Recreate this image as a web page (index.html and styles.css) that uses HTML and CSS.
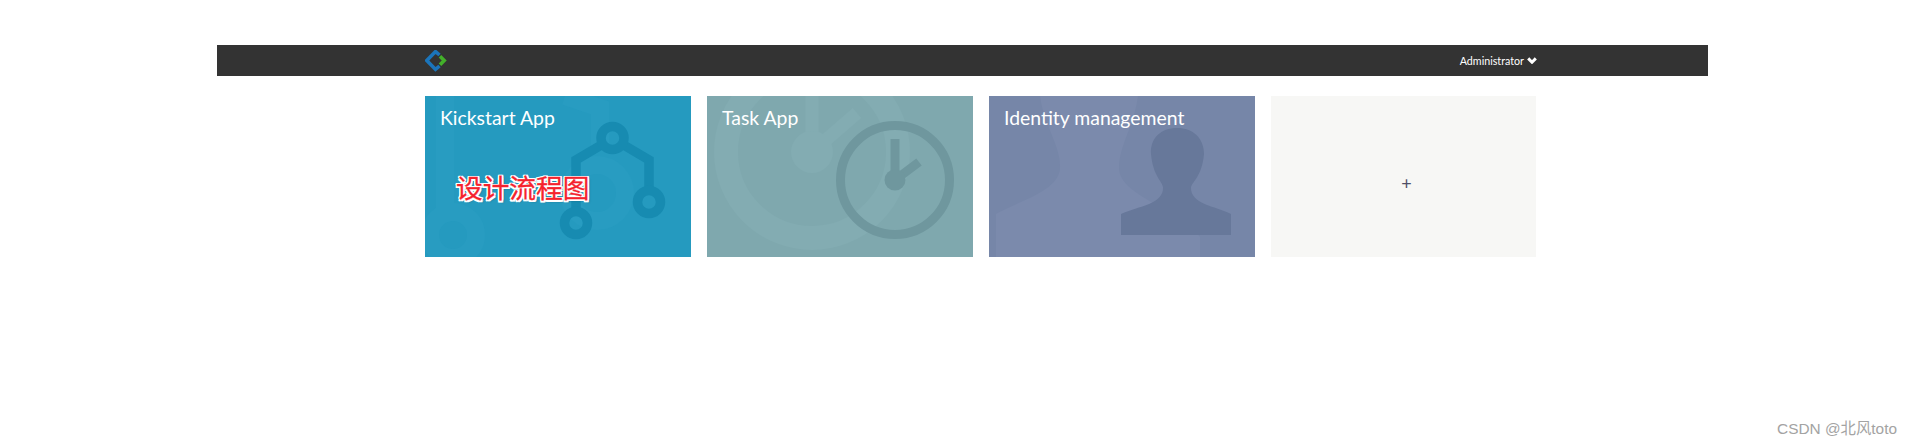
FILE: index.html
```html
<!DOCTYPE html>
<html lang="en">
<head>
    <meta charset="UTF-8">
    <meta name="viewport" content="width=device-width, initial-scale=1.0">
    <title>Flowable</title>
    <link rel="stylesheet" href="styles.css">
</head>
<body>
    <div class="page">
        <header class="navbar">
            <svg class="logo" width="22" height="22" viewBox="0 0 22 22" aria-label="logo">
                <path class="logo-blue" d="M14.5 5 L10.5 1.6 L1.8 10.5 L10.5 19.4 L14.5 16"/>
                <path class="logo-green" d="M15 6.2 L19.2 10.5 L15 14.8"/>
            </svg>
            <div class="user-menu">
                <span>Administrator</span>
                <svg class="chevron" width="10" height="7" viewBox="0 0 10 7">
                    <path d="M1.2 1.4 L5 5.2 L8.8 1.4"/>
                </svg>
            </div>
        </header>

        <main class="apps">
            <a class="app app-kickstart">
                <svg class="app-art" viewBox="0 0 266 161">
                    <g class="art-faint">
                        <circle cx="28" cy="139" r="23" />
                        <path d="M20 0 V 112 M140 0 L175 12 V52" />
                        <circle cx="172" cy="97" r="28" />
                    </g>
                    <g class="art-main">
                        <path d="M151 116 V64 L178 48 M197 48 L224 64 V95" />
                        <circle cx="187.5" cy="42" r="11.5" />
                        <circle cx="224" cy="106" r="11.5" />
                        <circle cx="151" cy="127" r="11.5" />
                    </g>
                </svg>
                <h2 class="app-title">Kickstart App</h2>
                <span class="note">设计流程图</span>
            </a>

            <a class="app app-task">
                <svg class="app-art" viewBox="0 0 266 161">
                    <g class="art-faint">
                        <circle class="ring" cx="105" cy="56" r="86" />
                        <path d="M105 56 V0 M105 56 L150 17" />
                        <circle class="fill" cx="105" cy="56" r="21" />
                    </g>
                    <g class="art-main">
                        <circle cx="188" cy="84" r="54.5" />
                        <path d="M188 84 V43 M188 84 L212 66" />
                        <circle class="fill" cx="188" cy="84" r="10.5" />
                    </g>
                </svg>
                <h2 class="app-title">Task App</h2>
            </a>

            <a class="app app-idm">
                <svg class="app-art" viewBox="0 0 266 161">
                    <path class="person-faint" d="M51 0 C55 30 72 50 71 72 C70 95 30 105 7 118 V161 H211 V141 C190 112 130 100 130 72 C130 50 145 30 149 0 Z" />
                    <path class="person-main" d="M132 139 V118 C150 110 175 108 174 91 C173 85 164 80 162 58 C161 42 172 32 188 32 C204 32 215 42 215 58 C213 80 204 85 202 91 C201 108 226 110 242 118 V139 Z" />
                </svg>
                <h2 class="app-title">Identity management</h2>
            </a>

            <a class="app app-add">
                <span class="plus">+</span>
            </a>
        </main>
    </div>
    <div class="watermark">CSDN @北风toto</div>
</body>
</html>
```

FILE: styles.css
```css
html, body {
    margin: 0;
    padding: 0;
    height: 100%;
    overflow: hidden;
    background-color: #fff;
}
body {
    font-family: Lato, 'Noto Sans', sans-serif;
}
.page {
    width: 1491px;
    padding-top: 45px;
    margin-left: 217px;
}
.navbar {
    height: 31px;
    background-color: #333;
    display: flex;
    align-items: center;
    justify-content: space-between;
    padding: 0 171px 0 208px;
}
.logo {
    display: block;
    fill: none;
}
.logo path {
    fill: none;
    stroke-width: 3.6;
}
.logo-blue {
    stroke: #1b75bb;
}
.logo-green {
    stroke: #43b02a;
}
.user-menu {
    display: flex;
    align-items: center;
    gap: 3px;
    color: #fff;
    font-size: 10.7px;
}
.chevron {
    fill: none;
    stroke: #fff;
    stroke-width: 3;
}
.apps {
    display: flex;
    gap: 16px;
    padding: 20px 0 0 208px;
}
.app {
    position: relative;
    display: block;
    flex: none;
    width: 266px;
    height: 161px;
    overflow: hidden;
}
.app-art {
    position: absolute;
    top: 0;
    left: 0;
    width: 266px;
    height: 161px;
}
.art-main, .art-faint {
    fill: none;
}
.app-title {
    position: relative;
    margin: 0;
    padding: 10px 15px;
    color: #fff;
    font-size: 19.4px;
    font-weight: 400;
    line-height: 24px;
}
.app-kickstart {
    background-color: #259abf;
}
.app-kickstart .art-main {
    stroke: #178bb1;
    stroke-width: 9.5;
}
.app-kickstart .art-faint {
    stroke: #289cc1;
    stroke-width: 18;
}
.app-task {
    background-color: #7fa8ae;
}
.app-task .art-main {
    stroke: #6f979e;
    stroke-width: 9;
}
.app-task .art-faint {
    stroke: #83acb2;
    stroke-width: 13;
}
.app-task .art-faint .ring {
    stroke-width: 24;
}
.art-main .fill {
    fill: #6f979e;
    stroke: none;
}
.art-faint .fill {
    fill: #83acb2;
    stroke: none;
}
.app-idm {
    background-color: #7686a8;
}
.person-main {
    fill: #67789a;
}
.person-faint {
    fill: #7b8aac;
}
.app.app-add {
    width: 265px;
    background-color: #f7f7f5;
    display: flex;
    align-items: center;
    justify-content: center;
}
.plus {
    padding: 12px 0 0 6px;
    color: #4f4f68;
    font-size: 18px;
    line-height: 16px;
}
.note {
    position: absolute;
    top: 73px;
    left: 31px;
    color: #f5222d;
    font-family: 'Noto Sans CJK SC', sans-serif;
    font-size: 26.7px;
    line-height: 36px;
    white-space: nowrap;
    -webkit-text-stroke: 0.3px #f5222d;
    text-shadow: 1.5px 0 0 #fff, -1.5px 0 0 #fff, 0 1.5px 0 #fff, 0 -1.5px 0 #fff, 1.5px 1.5px 0 #fff, -1.5px 1.5px 0 #fff, 1.5px -1.5px 0 #fff, -1.5px -1.5px 0 #fff, 2px 2px 2px rgba(0, 0, 0, 0.25);
}
.watermark {
    position: absolute;
    right: 14px;
    bottom: 7px;
    color: #a3a3a3;
    font-family: 'Liberation Sans', 'Noto Sans CJK SC', sans-serif;
    font-size: 15.4px;
    line-height: 20px;
}
```
